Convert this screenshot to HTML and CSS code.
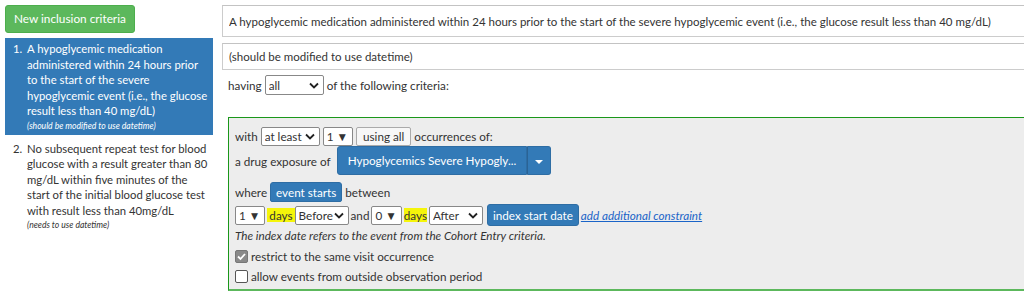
FILE: index.html
```html
<!DOCTYPE html>
<html lang="en">
<head>
    <meta charset="UTF-8">
    <title>Inclusion Criteria</title>
    <link rel="stylesheet" href="styles.css">
</head>
<body>
    <div class="page">
        <div class="sidebar">
            <button class="btn btn-success">New inclusion criteria</button>
            <ol class="criteria-list">
                <li class="active">
                    <span class="num">1.</span>
                    <div>A hypoglycemic medication<br>administered within 24 hours prior<br>to the start of the severe<br>hypoglycemic event (i.e., the glucose<br>result less than 40 mg/dL)
                        <div class="note">(should be modified to use datetime)</div>
                    </div>
                </li>
                <li>
                    <span class="num">2.</span>
                    <div>No subsequent repeat test for blood<br>glucose with a result greater than 80<br>mg/dL within five minutes of the<br>start of the initial blood glucose test<br>with result less than 40mg/dL
                        <div class="note">(needs to use datetime)</div>
                    </div>
                </li>
            </ol>
        </div>
        <div class="editor">
            <input class="field field-name" type="text" value="A hypoglycemic medication administered within 24 hours prior to the start of the severe hypoglycemic event (i.e., the glucose result less than 40 mg/dL)">
            <input class="field field-desc" type="text" value="(should be modified to use datetime)">
            <div class="having">
                having
                <select class="sel sel-all"><option>all</option></select>
                of the following criteria:
            </div>
            <div class="criteria-box">
                <div class="row row-count">
                    with
                    <select class="sel sel-least"><option>at least</option></select>
                    <span class="num-drop">1 &#9660;</span>
                    <button class="btn btn-light">using all</button>
                    occurrences of:
                </div>
                <div class="row row-concept">
                    a drug exposure of
                    <div class="split">
                        <button class="btn btn-primary concept">Hypoglycemics Severe Hypogly...</button>
                        <button class="btn btn-primary caret-btn"><span class="caret"></span></button>
                    </div>
                </div>
                <div class="row row-where">
                    where
                    <button class="btn btn-primary btn-xs">event starts</button>
                    between
                </div>
                <div class="row row-window">
                    <span class="num-drop">1 &#9660;</span>
                    <span class="joined"><span class="hl hl-wide">days</span><select class="sel sel-when"><option>Before</option></select></span>
                    and
                    <span class="num-drop">0 &#9660;</span>
                    <span class="hl">days</span>
                    <select class="sel sel-when"><option>After</option></select>
                    <button class="btn btn-primary btn-index">index start date</button>
                    <a href="#" class="add-link">add additional constraint</a>
                </div>
                <div class="hint">The index date refers to the event from the Cohort Entry criteria.</div>
                <label class="check"><input type="checkbox" checked> restrict to the same visit occurrence</label>
                <label class="check"><input type="checkbox"> allow events from outside observation period</label>
            </div>
        </div>
    </div>
</body>
</html>
```
FILE: styles.css
```css
body { margin: 0; font-family: Lato, "Open Sans", sans-serif; font-size: 11.7px; color: #333; background: #fff; overflow: hidden; }
.page { display: flex; gap: 9px; padding: 5px 0 0 5px; width: 1060px; }

.sidebar { width: 208px; flex: none; }
.btn { font-family: inherit; font-size: 11.7px; border: 1px solid transparent; border-radius: 3px; cursor: pointer; line-height: 1.4; white-space: nowrap; }
.btn-success { background: #5cb85c; border-color: #4cae4c; color: #fff; height: 28px; padding: 0 8px; font-size: 11.8px; }
.btn-primary { background: #337ab7; border-color: #2e6da4; color: #fff; }
.btn-light { background: #f7f7f7; border-color: #aaa; color: #333; padding: 0 6px; height: 19px; border-radius: 2px; }
.btn-xs { padding: 0 5px; height: 20px; border-radius: 3px 3px 2px 2px; }

.criteria-list { list-style: none; margin: 5px 0 0; padding: 0; }
.criteria-list li { display: flex; padding: 3px 0 1px 8px; line-height: 15.5px; font-size: 11.3px; white-space: nowrap; }
.criteria-list li .num { width: 14px; flex: none; }
.criteria-list li.active { background: #337ab7; color: #fff; }
.criteria-list li + li { margin-top: 3px; }
.note { font-size: 8.6px; font-style: italic; line-height: 15px; }

.editor { flex: 1; }
.field { display: block; width: 100%; box-sizing: border-box; font-family: inherit; font-size: 11.5px; color: #333; border: 1px solid #ccc; border-top-color: #c3c3c3; padding: 0 6px; }
.field-name { height: 32px; }
.field-desc { height: 27px; margin-top: 6px; }
.having { margin-top: 5px; padding-left: 6px; display: flex; align-items: center; gap: 3px; }

.sel { -webkit-appearance: none; appearance: none; font-family: inherit; font-size: 11.7px; color: #333; background: #fff url("data:image/svg+xml,%3Csvg xmlns='http://www.w3.org/2000/svg' width='10' height='7'%3E%3Cpath d='M1 1.5l4 4 4-4' fill='none' stroke='%23222' stroke-width='1.8'/%3E%3C/svg%3E") no-repeat right 4px center; border: 1px solid #888; border-radius: 2px; padding: 0 14px 0 3px; height: 20px; }
.sel-all { width: 59px; }
.sel-least { width: 59px; height: 19px; }
.sel-when { width: 54px; height: 19px; }

.criteria-box { margin: 22px 0 0 6px; background: #ededed; border: 1px solid #1a971a; border-bottom: 2px solid #5cb85c; padding: 9px 6px 3px; }
.row { display: flex; align-items: center; gap: 3px; }
.row-count { height: 18px; margin-bottom: 1px; }
.row-concept { height: 29px; margin-bottom: 7px; }
.row-where { height: 20px; margin-bottom: 2px; }
.row-window { height: 22px; gap: 2px; }
.joined { display: flex; align-items: center; }
.num-drop { display: inline-block; background: #fff; border: 1px solid #888; border-radius: 2px; height: 17px; line-height: 17px; padding: 0 4px 0 3px; color: #333; }
.split { display: flex; margin-left: 3px; }
.concept { height: 29px; padding: 0 10px; border-radius: 3px 0 0 3px; }
.caret-btn { width: 24px; height: 29px; border-radius: 0 3px 3px 0; border-left-color: #2a6395; padding: 0; }
.caret { display: inline-block; border-top: 4px solid #fff; border-left: 4px solid transparent; border-right: 4px solid transparent; vertical-align: middle; }
.hl { background: #f5f50a; }
.hl-wide { padding: 0 2px; }
.btn-index { height: 22px; padding: 0 5px; margin-left: 2px; }
.add-link { color: #1a64c8; font-style: italic; }
.hint { font-style: italic; margin-top: 2px; line-height: 15px; }
.check { display: flex; align-items: center; gap: 3px; height: 20px; }
.hint + .check { margin-top: 3px; }
.check input { -webkit-appearance: none; appearance: none; margin: 0; width: 13px; height: 13px; border: 1px solid #555; border-radius: 2px; background: #fff; }
.check input:checked { background: #8a8a8a url("data:image/svg+xml,%3Csvg xmlns='http://www.w3.org/2000/svg' width='11' height='11'%3E%3Cpath d='M2 5.5l2.5 2.5 4.5-5' fill='none' stroke='%23fff' stroke-width='1.8'/%3E%3C/svg%3E") no-repeat center; border-color: #777; }
```
